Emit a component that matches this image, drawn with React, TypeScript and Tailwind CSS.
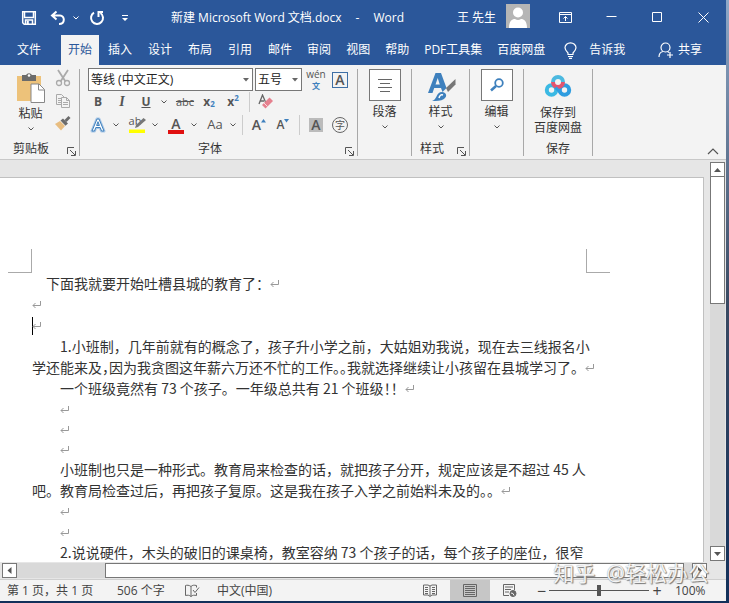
import type { ReactNode } from 'react'

const TABS = ['开始', '插入', '设计', '布局', '引用']
const MORE_TABS = ['邮件', '审阅', '视图', '帮助', 'PDF工具集', '百度网盘']

export default function App() {
  return (
    <div
      lang="zh-CN"
      className="flex h-screen flex-col overflow-hidden bg-linear-to-b from-[#8fa9c9] via-[#3a4a63] to-[#12305a] pr-[3px] pb-[2px] font-['Open_Sans','Noto_Sans_CJK_SC',sans-serif] text-xs text-[#333]"
    >
      <TitleBar />
      <TabBar />
      <Ribbon />
      <Workspace />
      <StatusBar />
    </div>
  )
}

function TitleBar() {
  return (
    <header className="flex h-[35px] shrink-0 items-center bg-[#2b579a] text-white">
      <div className="flex w-[171px] shrink-0 items-center pl-[21px]">
        <button aria-label="保存">
          <svg width="16" height="16" viewBox="0 0 16 16" fill="none" stroke="white" strokeWidth="1.5">
            <path d="M1.7 1.7h12.6v12.6H3.2L1.7 12.8z" />
            <path d="M3.5 2v5.5h9V2M4.5 14v-4h7v4" />
            <path d="M6 11v3h1.6v-3z" fill="white" strokeWidth="0.5" />
          </svg>
        </button>
        <button aria-label="撤消" className="ml-[13px]">
          <svg width="16" height="16" viewBox="0 0 16 16" fill="none" stroke="white" strokeWidth="2">
            <path d="M6.5 1.5L2 5.5l4.5 4M2.5 5.5H10c5 0 5.5 8.5-1 8.5" />
          </svg>
        </button>
        <button aria-label="撤消选项" className="ml-1 text-white">
          <Chevron />
        </button>
        <button aria-label="重做" className="ml-[7px]">
          <svg width="16" height="16" viewBox="0 0 16 16" fill="none" stroke="white" strokeWidth="2">
            <path d="M5 2.7A6 6 0 1 0 11.5 3" />
            <path d="M14 2H9.5v5" />
          </svg>
        </button>
        <button aria-label="自定义快速访问工具栏" className="ml-4">
          <svg width="8" height="8" viewBox="0 0 8 8" fill="white">
            <path d="M1 1h6v1H1zM1 4h6L4 7z" />
          </svg>
        </button>
      </div>
      <h1 className="flex gap-[14px] whitespace-nowrap">
        <span>新建 Microsoft Word 文档.docx</span>
        <span>-</span>
        <span>Word</span>
      </h1>
      <div className="ml-auto flex items-center self-stretch">
        <span className="whitespace-nowrap">王 先生</span>
        <svg className="mr-3 mb-[3px] ml-[10px]" width="24" height="24" viewBox="0 0 24 24">
          <path fill="#b5b5b5" d="M0 0h24v24H0z" />
          <circle cx="12" cy="8.5" r="5" fill="white" />
          <path fill="white" d="M3 24c0-7 3-9 6-9q3 2 6 0c3 0 6 2 6 9z" />
        </svg>
        <WindowButton label="功能区显示选项">
          <path d="M.5 1.5h12v10H.5zM.5 3.5h12M6.5 10V5.5M4.5 7.5l2-2 2 2" />
        </WindowButton>
        <WindowButton label="最小化">
          <path d="M1.5 5.5h10" />
        </WindowButton>
        <WindowButton label="最大化">
          <path d="M1.5 1.5h9v9h-9z" />
        </WindowButton>
        <WindowButton label="关闭">
          <path d="M1.5 1.5l10 10M11.5 1.5l-10 10" />
        </WindowButton>
      </div>
    </header>
  )
}

function WindowButton({ label, children }: { label: string; children: ReactNode }) {
  return (
    <button aria-label={label} className="flex h-8 w-[46px] items-center justify-center">
      <svg width="13" height="13" viewBox="0 0 13 13" fill="none" stroke="white">
        {children}
      </svg>
    </button>
  )
}

function TabBar() {
  return (
    <nav className="flex h-[30px] shrink-0 items-stretch bg-[#2b579a] pl-[10px] whitespace-nowrap text-white">
      <button className="mr-[13px] px-[7px]">文件</button>
      <div className="flex gap-[2px]">
        {TABS.map((tab) => (
          <button key={tab} className={tab === '开始' ? 'bg-[#f3f3f3] px-[7px] text-[#2b579a]' : 'px-[7px]'}>
            {tab}
          </button>
        ))}
      </div>
      <div className="ml-[2px] flex gap-px">
        {MORE_TABS.map((tab) => (
          <button key={tab} className="px-[7px]">{tab}</button>
        ))}
      </div>
      <button className="ml-3 flex items-center gap-3">
        <svg width="13" height="17" viewBox="0 0 13 17" fill="none" stroke="white" strokeWidth="1.2">
          <path d="M4 12.5V11C2.5 9.5 1 8 1 5.8a5.5 5 0 0 1 11 0C12 8 10.5 9.5 9 11v1.5zM4 14.5h5M5 16.4h3" />
        </svg>
        告诉我
      </button>
      <button className="mr-6 ml-auto flex items-center gap-1">
        <svg width="16" height="16" viewBox="0 0 16 16" fill="none" stroke="white" strokeWidth="1.2">
          <circle cx="7.5" cy="5.5" r="4.5" />
          <path d="M1 15c0-3 1.5-5 4-5.5M9.5 9.500l1.500 1M12 10v6M9 13h6" />
        </svg>
        共享
      </button>
    </nav>
  )
}

function Chevron() {
  return (
    <svg width="12" height="6" viewBox="0 0 12 6" fill="none" stroke="currentColor">
      <path d="M3.5 1.5L6 4l2.5-2.5" />
    </svg>
  )
}

function Launcher({ label }: { label: string }) {
  return (
    <button aria-label={label} className="absolute right-[3px] bottom-0">
      <svg width="9" height="9" viewBox="0 0 9 9" fill="none" stroke="#555">
        <path d="M.5 7V.5H7M3 3l5 5M8.5 4v4.5H4" />
      </svg>
    </button>
  )
}

function Group({ name, launcher, className, children }: {
  name: string
  launcher?: boolean
  className: string
  children: ReactNode
}) {
  return (
    <section aria-label={name || '功能'} className={`relative flex shrink-0 flex-col border-r border-[#a8a8a8] ${className}`}>
      {children}
      <div className="mt-auto h-[15px] text-center leading-[15px]">{name}</div>
      {launcher && <Launcher label={`${name}设置`} />}
    </section>
  )
}

function Ribbon() {
  return (
    <div className="flex h-[95px] shrink-0 items-stretch border-b border-[#c8c8c8] bg-[#f3f3f3] pt-1 pb-[3px]">
      <Group name="剪贴板" launcher className="w-20 pr-[17px]">
        <div className="flex gap-[9px] pl-4">
          <button className="flex flex-col items-center text-center">
            <svg className="mt-[3px]" width="29" height="32" viewBox="0 0 29 32">
              <path d="M1 4h24v25H1z" fill="#edc27a" />
              <path d="M6 3h4a3.5 3.5 0 0 1 6 0h4v6H6z" fill="#6b6b6b" />
              <circle cx="13" cy="3.5" r="1.3" fill="white" />
              <path d="M15 12h8l5.500 5.500V30.500H15z" fill="white" stroke="#888" />
              <path d="M22.500 12v6h6" fill="none" stroke="#888" />
            </svg>
            <span className="leading-5">粘贴</span>
            <span className="mt-[2px] text-[#555]"><Chevron /></span>
          </button>
          <div className="flex flex-col items-center gap-[6px]">
            <button aria-label="剪切">
              <svg width="16" height="18" viewBox="0 0 16 18" fill="none" stroke="#aaa" strokeWidth="1.8">
                <path d="M3 1l7.5 11.5M13 1L5.500 12.5" />
                <circle cx="4" cy="14" r="2.5" strokeWidth="1.3" />
                <circle cx="12" cy="14" r="2.5" strokeWidth="1.3" />
              </svg>
            </button>
            <button aria-label="复制">
              <svg width="16" height="16" viewBox="0 0 16 16" fill="#f3f3f3" stroke="#aaa">
                <path d="M1.5 1.5h5l3 3v7h-8zM3 5.500h3M3 7.500h3M3 9.500h3" />
                <path d="M6.5 4.5h5l3 3v7h-8zM11.5 4.5v3h3M8 9.500h5M8 11.500h5" />
              </svg>
            </button>
            <button aria-label="格式刷">
              <svg width="17" height="16" viewBox="0 0 17 16">
                <path d="M1 9l5-3 5 5-4 4.5z" fill="#e8bd80" />
                <path d="M6.5 5.5L9 3.5l5 5-2.5 2.2z" fill="#6b6b6b" />
                <path d="M10.5 5l4-4L16.5 3l-4 4z" fill="#6b6b6b" />
              </svg>
            </button>
          </div>
        </div>
      </Group>
      <FontGroup />
      <Group name="" className="w-[54px]">
        <BigButton label="段落">
          <Framed>
            <path d="M3 3.5h14M5 7.5h10M3 11.5h14M5 15.5h10" stroke="#666" />
          </Framed>
        </BigButton>
      </Group>
      <Group name="样式" launcher className="w-[58px] pr-[17px]">
        <div className="-mr-[17px]">
          <BigButton label="样式">
            <svg className="ml-1" width="29" height="32" viewBox="0 0 29 32">
              <path fillRule="evenodd" d="M0 24L7.500 4H13l5.500 15-4 4-1.500-4H6.200L4.500 24zM7.500 15.500h4.300L9.700 9z" fill="#3e80bd" />
              <path d="M18 19l9.500-9v5.500L20 23z" fill="#777" />
              <path d="M4 32c5-1 4-9 10-9 4 0 6 4 2 7-3 2-8 2-12 2z" fill="#3e80bd" />
              <path d="M11 29q1-4 4-3" fill="none" stroke="white" strokeWidth="1.5" />
            </svg>
          </BigButton>
        </div>
      </Group>
      <Group name="" className="w-[54px]">
        <BigButton label="编辑">
          <Framed>
            <g fill="none" stroke="#3e80bd" strokeWidth="1.8">
              <circle cx="12" cy="7" r="3.8" />
              <path d="M9 10l-5 4.5" strokeWidth="2.5" />
            </g>
          </Framed>
        </BigButton>
      </Group>
      <Group name="保存" className="w-[69px]">
        <button className="flex flex-col items-center leading-[15px]">
          <svg className="mt-[5px] mb-[7px]" width="28" height="24" viewBox="0 0 28 24" fill="none" strokeWidth="4">
            <circle cx="7.5" cy="16" r="4.7" stroke="#3bb9e3" />
            <circle cx="20.5" cy="16" r="4.7" stroke="#2f9de0" />
            <path d="M9 8a5 5 0 0 1 10 0" stroke="#4cb9e0" />
            <path d="M19 8a5 5 0 0 1-10 0" stroke="#e3546f" />
            <path d="M11.500 13.500l6 6" stroke="#2f9de0" strokeWidth="3" />
          </svg>
          <span>保存到</span>
          <span>百度网盘</span>
        </button>
      </Group>
      <button aria-label="折叠功能区" className="mt-auto mr-[7px] ml-auto">
        <svg width="12" height="8" viewBox="0 0 12 8" fill="none" stroke="#555" strokeWidth="1.2">
          <path d="M1 6l5-5 5 5" />
        </svg>
      </button>
    </div>
  )
}

function BigButton({ label, children }: { label: string; children: ReactNode }) {
  return (
    <button className="flex w-full flex-col items-center">
      {children}
      <span className="mt-px leading-5">{label}</span>
      <span className="mt-[2px] text-[#555]"><Chevron /></span>
    </button>
  )
}

function Framed({ children }: { children: ReactNode }) {
  return (
    <span className="flex size-8 items-center justify-center border border-[#777] bg-white">
      <svg width="20" height="18" viewBox="0 0 20 18">{children}</svg>
    </span>
  )
}

function Combo({ label, value, className }: { label: string; value: string; className: string }) {
  return (
    <div className={`relative h-[23px] ${className}`}>
      <select
        aria-label={label}
        className="h-full w-full appearance-none border border-[#777] bg-white px-[2px] text-xs text-[#222]"
      >
        <option>{value}</option>
      </select>
      <svg className="pointer-events-none absolute top-[10px] right-1" width="6" height="4" viewBox="0 0 6 4" fill="#666">
        <path d="M0 0h6L3 3.5z" />
      </svg>
    </div>
  )
}

function Tool({ label, className = '', children }: { label: string; className?: string; children: ReactNode }) {
  return (
    <button aria-label={label} className={`flex h-[22px] w-6 shrink-0 items-center justify-center text-[#555] ${className}`}>
      {children}
    </button>
  )
}

function More({ label }: { label: string }) {
  return (
    <button aria-label={label} className="mr-[3px] w-3 shrink-0 text-[#555]">
      <Chevron />
    </button>
  )
}

function FontGroup() {
  return (
    <Group name="字体" launcher className="w-[278px] pr-[17px]">
      <div className="-mt-px -mr-[17px] flex items-center pl-2">
        <Combo label="字体名称" value="等线 (中文正文)" className="w-[165px]" />
        <Combo label="字号" value="五号" className="ml-[2px] w-[47px]" />
        <Tool label="拼音指南" className="ml-[2px] flex-col text-[10px]">
          <span className="leading-[11px]">wén</span>
          <span className="text-[8px] leading-[11px] font-bold text-[#3e80bd]">文</span>
        </Tool>
        <Tool label="字符边框">
          <span className="flex size-4 items-center justify-center border border-[#3e6fa5] text-sm font-semibold">A</span>
        </Tool>
      </div>
      <div className="-mr-[17px] flex items-center pl-[6px]">
        <Tool label="加粗" className="font-bold">B</Tool>
        <Tool label="倾斜" className="font-['Liberation_Serif',serif] text-sm font-bold italic">I</Tool>
        <Tool label="下划线" className="font-bold underline">U</Tool>
        <More label="下划线选项" />
        <Tool label="删除线" className="text-[11px] line-through">abc</Tool>
        <Tool label="下标" className="font-bold">x<sub className="text-[8px] text-[#3e80bd]">2</sub></Tool>
        <Tool label="上标" className="font-bold">x<sup className="text-[8px] text-[#3e80bd]">2</sup></Tool>
        <span className="mx-1 h-5 w-px bg-[#ccc]" />
        <Tool label="清除格式">
          <svg width="16" height="16" viewBox="0 0 16 16" fill="none">
            <path d="M1 10L4.5 1 7.5 8M2.5 7H6" stroke="#666" strokeWidth="1.3" />
            <path d="M4 11l7.5-7.5 3.500 3.500-7.500 7.500z" fill="#e5808e" />
            <path d="M6 9l3.500 3.500" stroke="#f8dadd" />
          </svg>
        </Tool>
      </div>
      <div className="mt-px -mr-[17px] flex items-center pl-[6px]">
        <Tool label="文本效果">
          <svg width="16" height="16" viewBox="0 0 16 16" fill="none" strokeLinejoin="round">
            <path d="M2 14L7 2h2l5 12h-2.5l-1.3-3.5H5.8L4.5 14zM6.6 8.5h2.8L8 4.7z" stroke="#a9c7e6" strokeWidth="3" />
            <path d="M2 14L7 2h2l5 12h-2.5l-1.3-3.5H5.8L4.5 14zM6.6 8.5h2.8L8 4.7z" fill="white" stroke="#3e80bd" />
          </svg>
        </Tool>
        <More label="文本效果选项" />
        <Tool label="突出显示" className="relative">
          <span className="mr-1 mb-2 text-[11px]">ab</span>
          <svg className="absolute top-[3px] left-1" width="18" height="17" viewBox="0 0 18 17">
            <path d="M0 12.5h16V16H0z" fill="#ffff00" />
            <path d="M6 11l1-3 7.5-7L17 3 9 10z" fill="#777" />
          </svg>
        </Tool>
        <More label="突出显示颜色" />
        <Tool label="字体颜色">
          <span className="h-[17px] w-4 border-b-4 border-[#e01010] text-sm leading-[14px] font-semibold">A</span>
        </Tool>
        <More label="字体颜色选项" />
        <Tool label="更改大小写" className="text-[13px]">Aa</Tool>
        <More label="大小写选项" />
        <span className="mr-1 h-5 w-px bg-[#ccc]" />
        <Tool label="增大字号" className="text-sm font-semibold">
          A
          <svg className="mb-[9px]" width="5" height="4" viewBox="0 0 5 4" fill="#3e80bd"><path d="M0 3.5L2.5 0 5 3.5z" /></svg>
        </Tool>
        <Tool label="减小字号" className="font-semibold">
          A
          <svg className="mb-[9px]" width="5" height="4" viewBox="0 0 5 4" fill="#3e80bd"><path d="M0 0h5L2.5 3.5z" /></svg>
        </Tool>
        <span className="mx-1 h-5 w-px bg-[#ccc]" />
        <Tool label="字符底纹">
          <span className="h-[14px] w-[14px] bg-[#bbb] text-sm leading-[14px] font-semibold">A</span>
        </Tool>
        <Tool label="带圈字符">
          <span className="size-4 rounded-full border border-[#666] text-[10px] leading-[14px]">字</span>
        </Tool>
      </div>
    </Group>
  )
}

// paragraph mark shown at the end of each paragraph
function Mark() {
  return (
    <svg className="inline-block align-[1px]" width="10" height="8" viewBox="0 0 10 8" fill="none" stroke="#999">
      <path d="M8.5 0v4.5H1M3.5 2L1 4.5 3.5 7" />
    </svg>
  )
}

// half-width setting for full-width punctuation
function Tight({ children }: { children: ReactNode }) {
  return <span className="[font-feature-settings:'halt']">{children}</span>
}

function Workspace() {
  return (
    <main className="relative flex min-h-0 flex-1 flex-col bg-[#e6e6e6]">
      <div className="flex min-h-0 flex-1">
        <div className="mt-[17px] mr-[6px] min-w-0 flex-1 overflow-hidden border-t border-r border-[#c0c0c0] bg-white pt-[71px]">
          <div className="ml-2 flex w-[602px] justify-between">
            <span className="size-6 border-r border-b border-[#aaa]" />
            <span className="size-6 border-b border-l border-[#aaa]" />
          </div>
          <article className="ml-8 font-['Noto_Sans_CJK_SC',sans-serif] text-sm leading-[21px] whitespace-nowrap text-[#333]">
            <p className="pl-[14px]">下面我就要开始吐槽县城的教育了：<Mark /></p>
            <p><Mark /></p>
            <p className="flex h-[21px] items-center"><span className="-mr-px h-[18px] w-px bg-black" /><Mark /></p>
            <p className="pl-7">1.小班制，几年前就有的概念了，孩子升小学之前，大姑姐劝我说，现在去三线报名小</p>
            <p>学还能来及<Tight>，</Tight>因为我贪图这年薪六万还不忙的工作<Tight>。。</Tight>我就选择继续让小孩留在县城学习了。<Mark /></p>
            <p className="pl-7">一个班级竟然有 73 个孩子。一年级总共有 21 个班级<Tight>！</Tight>！<Mark /></p>
            <p className="pl-7 leading-5"><Mark /></p>
            <p className="pl-7 leading-5"><Mark /></p>
            <p className="pl-7 leading-5"><Mark /></p>
            <p className="pl-7">小班制也只是一种形式。教育局来检查的话，就把孩子分开，规定应该是不超过 45 人</p>
            <p>吧。教育局检查过后，再把孩子复原。这是我在孩子入学之前始料未及的。。<Mark /></p>
            <p className="pl-7"><Mark /></p>
            <p className="pl-7 leading-5"><Mark /></p>
            <p className="pl-7">2.说说硬件，木头的破旧的课桌椅，教室容纳 73 个孩子的话，每个孩子的座位，很窄</p>
          </article>
        </div>
        <div className="mt-[2px] mr-px mb-px flex w-[15px] shrink-0 flex-col bg-[#d9d9d9]">
          <ScrollButton label="向上滚动"><path d="M0 6l3.5-4L7 6z" /></ScrollButton>
          <div className="-mt-px h-[128px] border border-[#777] bg-white" />
          <div className="mt-auto flex"><ScrollButton label="向下滚动"><path d="M0 2h7L3.5 6z" /></ScrollButton></div>
        </div>
      </div>
      <div className="flex h-[17px] shrink-0 items-center pr-[19px] pl-[2px]">
        <ScrollButton label="向左滚动"><path d="M5.5 0v7l-4-3.5z" /></ScrollButton>
        <div className="flex h-[15px] flex-1 bg-[#d9d9d9] pr-2 pl-[88px]">
          <div className="flex-1 border border-[#777] bg-white" />
        </div>
        <ScrollButton label="向右滚动"><path d="M2 0v7l4-3.5z" /></ScrollButton>
      </div>
      <div className="pointer-events-none absolute right-[17px] -bottom-1 z-10 text-[21px] leading-5 whitespace-pre text-white/90 [text-shadow:1px_1px_1px_#777,0_0_1px_#888]">
        知乎  @轻松办公
      </div>
    </main>
  )
}

function ScrollButton({ label, children }: { label: string; children: ReactNode }) {
  return (
    <button aria-label={label} className="flex size-[15px] shrink-0 items-center justify-center border border-[#777] bg-white">
      <svg width="7" height="7" viewBox="0 0 7 7" fill="#555">{children}</svg>
    </button>
  )
}

function StatusBar() {
  return (
    <footer className="flex h-[22px] shrink-0 items-center border-t border-[#cfcfcf] bg-[#f3f3f3] pl-[7px] whitespace-nowrap text-[#444]">
      <span className="w-[110px]">第 1 页，共 1 页</span>
      <span className="w-[67px]">506 个字</span>
      <button aria-label="校对" className="w-[33px]">
        <svg width="16" height="14" viewBox="0 0 16 14" fill="none" stroke="#666">
          <path d="M7 2.5C5 1 3 1 1.5 1.5v10c2-.5 4-.5 5.5 1zM7 2.5C8.5 1 10 1 12.5 1.5v2M7 12.5c1.5-1.5 3.5-1.5 5.5-1V9M9 6l2 2.5 4-5" />
        </svg>
      </button>
      <span>中文(中国)</span>
      <div className="ml-auto flex items-center self-stretch">
        <button aria-label="阅读视图" className="flex h-full w-10 items-center justify-center">
          <svg width="14" height="13" viewBox="0 0 14 13" fill="none" stroke="#666">
            <path d="M7 2L5 1H.5v10H5l2 1.5L9 11h4.5V1H9L7 2v10M2 3.5h3M2 5.5h3M2 7.5h3M2 9.5h3M9 3.5h3M9 5.5h3M9 7.5h3M9 9.5h3" />
          </svg>
        </button>
        <button aria-label="页面视图" className="flex h-full w-10 items-center justify-center bg-[#c6c6c6]">
          <svg width="14" height="14" viewBox="0 0 14 14" fill="none" stroke="#666">
            <path d="M.5.5h13v12H.5zM2 2.5h10M2 4.5h10M2 6.5h10M2 8.5h10M2 10.5h10" />
          </svg>
        </button>
        <button aria-label="Web 版式视图" className="flex h-full w-10 items-center justify-center">
          <svg width="14" height="14" viewBox="0 0 14 14" fill="none" stroke="#666">
            <path d="M6 11.5H.5V.5h11V6M2 3h8M2 5.5h6M2 8h4" />
            <circle cx="10" cy="9.5" r="3" fill="#666" />
            <path d="M8 9l2 .5 1 2" stroke="#f3f3f3" />
          </svg>
        </button>
        <button aria-label="缩小" className="ml-1 w-[15px] text-center text-base leading-4">−</button>
        <input
          type="range"
          aria-label="显示比例"
          min={10}
          max={190}
          defaultValue={100}
          className="h-4 w-[100px] appearance-none bg-transparent [&::-webkit-slider-runnable-track]:h-px [&::-webkit-slider-runnable-track]:bg-[#555] [&::-webkit-slider-thumb]:-mt-[5px] [&::-webkit-slider-thumb]:h-[11px] [&::-webkit-slider-thumb]:w-1 [&::-webkit-slider-thumb]:appearance-none [&::-webkit-slider-thumb]:bg-[#555]"
        />
        <button aria-label="放大" className="w-4 text-center text-base leading-4">+</button>
        <span className="w-[61px] pl-[10px]">100%</span>
      </div>
    </footer>
  )
}
